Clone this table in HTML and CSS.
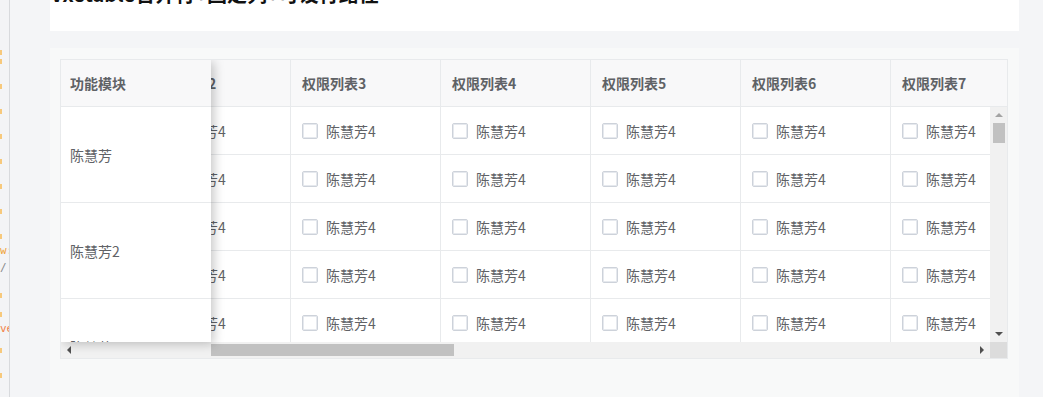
FILE: index.html
```html
<!DOCTYPE html>
<html lang="zh-CN">
<head>
    <meta charset="UTF-8">
    <meta name="viewport" content="width=device-width, initial-scale=1.0">
    <title>vxetable 合并行 + 固定列</title>
    <link rel="stylesheet" href="styles.css">
</head>
<body>
<div class="page">

    <!-- bord de l'éditeur à gauche -->
    <div class="gutter">
        <i class="mk first"></i>
        <i class="mk tight"></i>
        <i class="mk"></i>
        <i class="mk"></i>
        <i class="mk"></i>
        <i class="mk"></i>
        <i class="mk"></i>
        <i class="mk"></i>
        <i class="mk"></i>
        <span class="code orange">w:</span>
        <span class="code"><b class="grey">/</b><b class="blue">'</b></span>
        <i class="mk"></i>
        <i class="mk small"></i>
        <span class="code red">ve</span>
        <i class="mk small"></i>
        <i class="mk"></i>
    </div>

    <div class="main">
        <div class="title-card">
            <h2>vxetable合并行+固定列+可设行路径</h2>
        </div>

        <div class="panel">
            <div class="vtable">

                <div class="vt-head">
                    <div class="shift">
                        <div class="th">功能模块</div>
                        <div class="th">权限列表1</div>
                        <div class="th">权限列表2</div>
                        <div class="th">权限列表3</div>
                        <div class="th">权限列表4</div>
                        <div class="th">权限列表5</div>
                        <div class="th">权限列表6</div>
                        <div class="th">权限列表7</div>
                        <div class="th">权限列表8</div>
                    </div>
                </div>

                <div class="vt-body">
                    <div class="vt-view">
                        <div class="shift rows" id="rows"></div>
                    </div>
                    <div class="vscroll">
                        <div class="arrow"><span class="tri up off"></span></div>
                        <div class="vthumb"></div>
                        <div class="fill"></div>
                        <div class="arrow"><span class="tri down"></span></div>
                    </div>
                </div>

                <div class="vt-foot">
                    <div class="hscroll">
                        <div class="arrow h"><span class="tri left"></span></div>
                        <div class="hthumb"></div>
                        <div class="fill"></div>
                        <div class="arrow h"><span class="tri right"></span></div>
                    </div>
                    <div class="corner"></div>
                </div>

                <!-- colonne fixe à gauche, lignes fusionnées par 2 -->
                <div class="vt-fixed">
                    <div class="th fixed-th">功能模块</div>
                    <div class="merged">陈慧芳</div>
                    <div class="merged">陈慧芳2</div>
                    <div class="merged">陈慧芳3</div>
                </div>
            </div>
        </div>
    </div>
</div>

<script>
    // génère les lignes du corps
    const rows = document.getElementById('rows');
    const names = ['陈慧芳', '陈慧芳', '陈慧芳2', '陈慧芳2', '陈慧芳3'];
    for (let r = 0; r < names.length; r++) {
        const row = document.createElement('div');
        row.className = 'tr';
        let html = '<div class="td">' + names[r] + '</div>';
        for (let c = 1; c <= 8; c++) {
            html += '<div class="td"><span class="cb"></span><span>陈慧芳4</span></div>';
        }
        row.innerHTML = html;
        rows.appendChild(row);
    }
</script>
</body>
</html>
```

FILE: styles.css
```css
* {
    box-sizing: border-box;
}
body {
    margin: 0;
    font-family: "Noto Sans CJK SC", "Noto Sans", sans-serif;
    font-size: 14px;
    color: #606266;
    background-color: #f4f5f7;
    overflow: hidden;
}
.page {
    display: flex;
    height: 397px;
}

/* gouttière de l'éditeur */
.gutter {
    width: 10px;
    flex: none;
    border-right: 1px solid #d8dadd;
    display: flex;
    flex-direction: column;
    overflow: hidden;
    background-color: #f3f4f6;
}
.mk {
    display: block;
    width: 2px;
    height: 5px;
    margin-top: 20px;
    background-color: #f7c97c;
}
.mk.first {
    margin-top: 50px;
}
.mk.tight {
    margin-top: 4px;
}
.mk.small {
    margin-top: 14px;
}
.code {
    display: block;
    font-family: "DejaVu Sans Mono", monospace;
    font-size: 11px;
    line-height: 11px;
    margin-top: 6px;
    white-space: nowrap;
}
.code b {
    font-weight: normal;
}
.orange {
    color: #f0a43c;
}
.red {
    color: #f2834a;
}
.grey {
    color: #8a8a8a;
}
.blue {
    color: #3aa0f0;
}

.main {
    flex: 1;
    min-width: 0;
    padding: 0 24px 0 40px;
    display: flex;
    flex-direction: column;
}
.title-card {
    height: 31px;
    flex: none;
    background-color: #fff;
    overflow: hidden;
    margin-bottom: 17px;
}
.title-card h2 {
    margin: -20px 0 0 1px;
    font-size: 20px;
    line-height: 28px;
    font-weight: bold;
    color: #111;
    white-space: nowrap;
}
.panel {
    flex: 1;
    min-width: 0;
    background-color: #f8f9f9;
    padding: 11px 11px 0 10px;
}

/* tableau */
.vtable {
    position: relative;
    border: 1px solid #e8eaec;
    background-color: #fff;
    overflow: hidden;
}
.vt-head {
    height: 47px;
    background-color: #f8f8f9;
    border-bottom: 1px solid #e8eaec;
    overflow: hidden;
}
.shift {
    display: flex;
    margin-left: -220px;
}
.th {
    flex: none;
    width: 150px;
    height: 46px;
    padding: 0 11px;
    border-right: 1px solid #e8eaec;
    display: flex;
    align-items: center;
    font-weight: bold;
    color: #5f6266;
}
.vt-body {
    display: flex;
    height: 235px;
}
.vt-view {
    flex: 1;
    min-width: 0;
    overflow: hidden;
}
.rows {
    flex-direction: column;
}
.tr {
    display: flex;
    height: 48px;
    border-bottom: 1px solid #e8eaec;
}
.td {
    flex: none;
    width: 150px;
    padding: 0 11px;
    border-right: 1px solid #e8eaec;
    display: flex;
    align-items: center;
    gap: 8px;
    white-space: nowrap;
}
.cb {
    flex: none;
    width: 16px;
    height: 16px;
    border: 1px solid #cdd2da;
    border-radius: 2px;
    background-color: #fff;
    box-shadow: inset 0 0 0 1px #e6e9ee;
}

/* barres de défilement */
.vscroll {
    width: 17px;
    flex: none;
    background-color: #f1f1f1;
    display: flex;
    flex-direction: column;
}
.arrow {
    height: 16px;
    display: flex;
    align-items: center;
    justify-content: center;
    flex: none;
}
.arrow.h {
    width: 16px;
    height: 16px;
}
.fill {
    flex: 1;
}
.vthumb {
    height: 20px;
    width: 12px;
    margin-left: 3px;
    background-color: #c1c1c1;
}
.vt-foot {
    display: flex;
    height: 16px;
}
.hscroll {
    flex: 1;
    min-width: 0;
    display: flex;
    background-color: #f1f1f1;
}
.hthumb {
    flex: none;
    width: 243px;
    height: 12px;
    margin: 2px 0 0 134px;
    background-color: #c1c1c1;
}
.corner {
    width: 17px;
    flex: none;
    background-color: #dcdcdc;
}
.tri {
    width: 0;
    height: 0;
    border: 4px solid transparent;
}
.tri.up {
    border-top: 0;
    border-bottom-color: #505050;
}
.tri.up.off {
    border-bottom-color: #a3a3a3;
}
.tri.down {
    border-bottom: 0;
    border-top-color: #505050;
}
.tri.left {
    border-left: 0;
    border-right-color: #505050;
}
.tri.right {
    border-right: 0;
    border-left-color: #505050;
}

/* colonne fixe */
.vt-fixed {
    position: absolute;
    left: 0;
    top: 0;
    bottom: 16px;
    width: 150px;
    background-color: #fff;
    box-shadow: 3px 2px 10px rgba(0, 0, 0, 0.22);
    overflow: hidden;
}
.fixed-th {
    height: 47px;
    padding: 0 9px;
    border-right: 0;
    border-bottom: 1px solid #e8eaec;
    background-color: #f8f8f9;
}
.merged {
    height: 96px;
    padding: 0 9px;
    display: flex;
    align-items: center;
    border-bottom: 1px solid #e8eaec;
    flex: none;
}
```
